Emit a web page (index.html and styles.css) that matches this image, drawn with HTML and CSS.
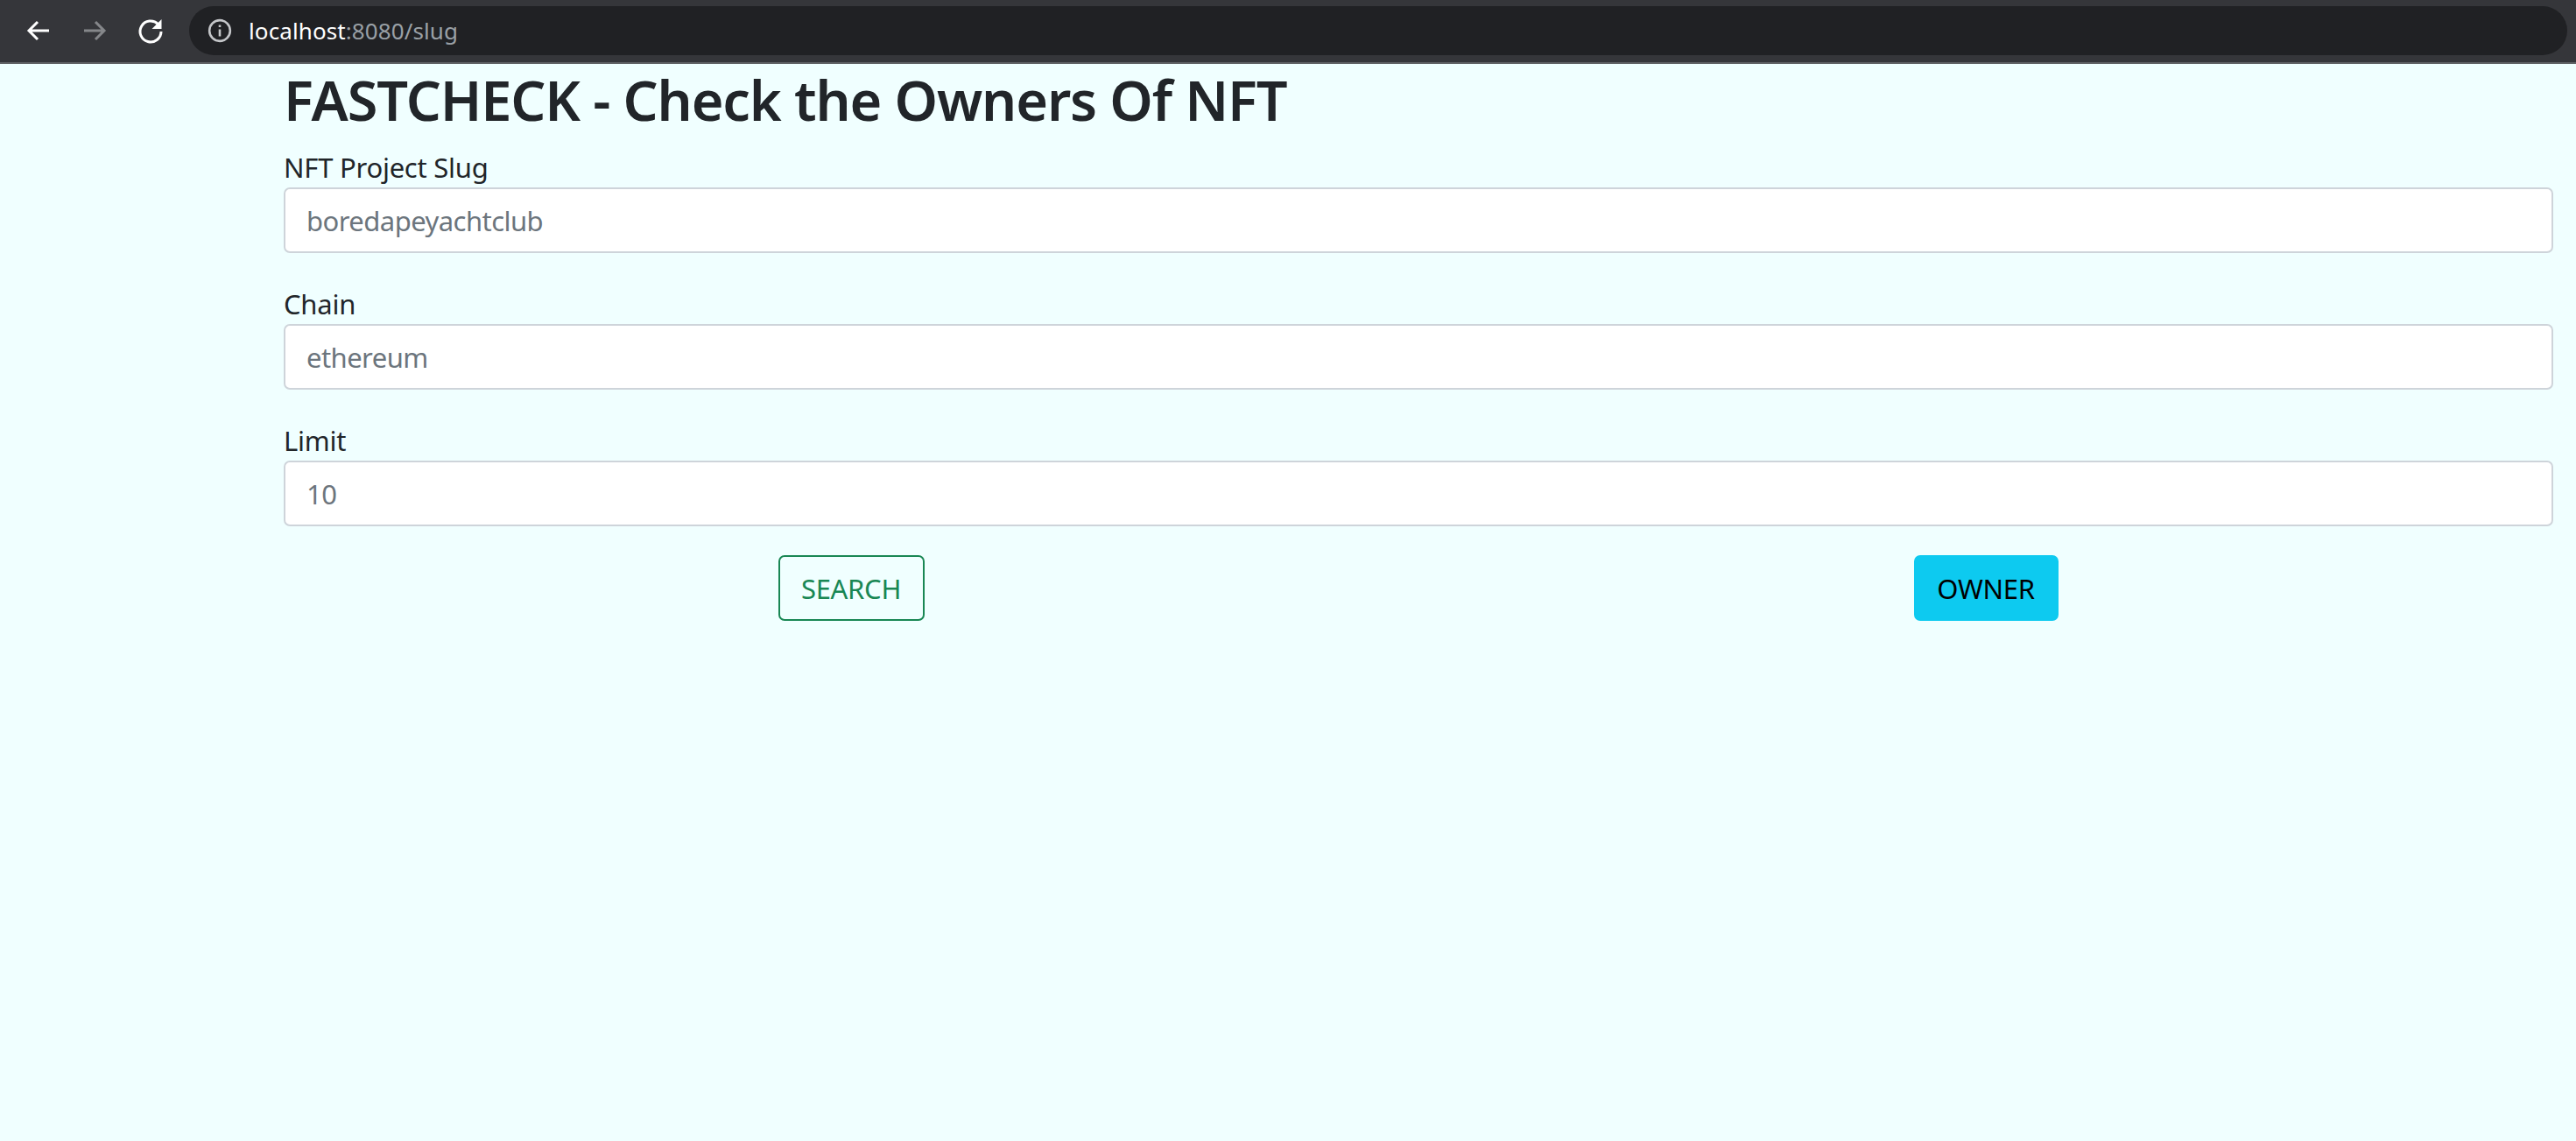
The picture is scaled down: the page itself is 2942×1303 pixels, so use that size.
FILE: index.html
```html
<!DOCTYPE html>
<html lang="en">
<head>
<meta charset="utf-8">
<title>FASTCHECK</title>
<link rel="stylesheet" href="styles.css">
</head>
<body>
<header class="toolbar">
  <button class="nav" aria-label="Back"><svg viewBox="0 0 32 32" class="ico"><path d="M28 16H6M15 6 5 16l10 10" fill="none" stroke="#fff" stroke-width="3"/></svg></button>
  <button class="nav" aria-label="Forward"><svg viewBox="0 0 32 32" class="ico"><path d="M4 16h22M17 6l10 10-10 10" fill="none" stroke="#85878a" stroke-width="3"/></svg></button>
  <button class="nav" aria-label="Reload"><svg viewBox="0 0 32 32" class="ico"><path d="M24.5 8.5A12 12 0 1 0 28 17" fill="none" stroke="#fff" stroke-width="3"/><path d="M28.5 3v11h-11z" fill="#fff"/></svg></button>
  <div class="omnibox">
    <svg viewBox="0 0 26 26" class="info"><circle cx="13" cy="13" r="11" fill="none" stroke="#c4c6c9" stroke-width="2.4"/><path d="M11.8 11.5h2.4v7.5h-2.4zM11.8 7h2.4v2.4h-2.4z" fill="#c4c6c9"/></svg>
    <span class="url"><span class="host">localhost</span>:8080/slug</span>
  </div>
</header>
<main class="page">
  <h1 class="title">FASTCHECK - Check the Owners Of NFT</h1>
  <div class="field">
    <label class="label">NFT Project Slug</label>
    <input class="input" placeholder="boredapeyachtclub">
  </div>
  <div class="field">
    <label class="label">Chain</label>
    <input class="input" placeholder="ethereum">
  </div>
  <div class="field">
    <label class="label">Limit</label>
    <input class="input" placeholder="10">
  </div>
  <div class="actions">
    <div class="cell"><button class="btn btn-search">SEARCH</button></div>
    <div class="cell"><button class="btn btn-owner">OWNER</button></div>
  </div>
</main>
</body>
</html>
```

FILE: styles.css
```css
* { box-sizing: border-box; }
html, body { margin: 0; height: 100%; }
body {
  background: #f0ffff;
  font-family: "Noto Sans", "Open Sans", sans-serif;
  color: #212529;
  overflow: hidden;
}
.toolbar {
  height: 73px;
  background: #35363a;
  border-bottom: 2px solid #5f6064;
  display: flex;
  align-items: center;
  padding: 0 10px 2px 28px;
}
.nav {
  width: 32px;
  height: 32px;
  padding: 0;
  margin-right: 32px;
  border: 0;
  background: none;
  display: flex;
}
.nav:nth-child(3) { margin-right: 28px; }
.ico { width: 32px; height: 32px; }
.omnibox {
  flex: 1;
  height: 56px;
  background: #202124;
  border-radius: 28px;
  display: flex;
  align-items: center;
  padding-left: 21px;
}
.info { width: 28px; height: 28px; margin-right: 19px; }
.url { font-size: 26px; color: #9aa0a6; letter-spacing: 0.1px; }
.host { color: #fff; }
.page { padding: 0 26px 0 324px; }
.title {
  margin: 0;
  height: 82px;
  line-height: 82px;
  font-size: 63px;
  font-weight: 600;
  letter-spacing: -1.13px;
  color: #212529;
}
.field { margin-bottom: 39px; }
.label {
  display: block;
  height: 38px;
  line-height: 38px;
  font-size: 31px;
  letter-spacing: -0.25px;
  color: #212529;
  margin-top: 17px;
  margin-bottom: 4px;
}
.field + .field .label { margin-top: 0; }
.input {
  display: block;
  width: 100%;
  height: 75px;
  padding: 0 24px;
  background: #fff;
  border: 2px solid #ced4da;
  border-radius: 7px;
  font: inherit;
  font-size: 31px;
  letter-spacing: -0.55px;
  outline: none;
}
.input::placeholder { color: #6c757d; opacity: 1; }
.actions { display: flex; margin-top: -6px; }
.cell { flex: 1; display: flex; justify-content: center; }
.btn {
  height: 75px;
  padding: 0;
  border-radius: 7px;
  font: inherit;
  font-size: 31px;
  letter-spacing: -0.3px;
}
.btn-search { background: transparent; border: 2px solid #198754; color: #198754; width: 167px; }
.btn-owner { background: #0dcaf0; border: 2px solid #0dcaf0; color: #000; width: 165px; }
```
